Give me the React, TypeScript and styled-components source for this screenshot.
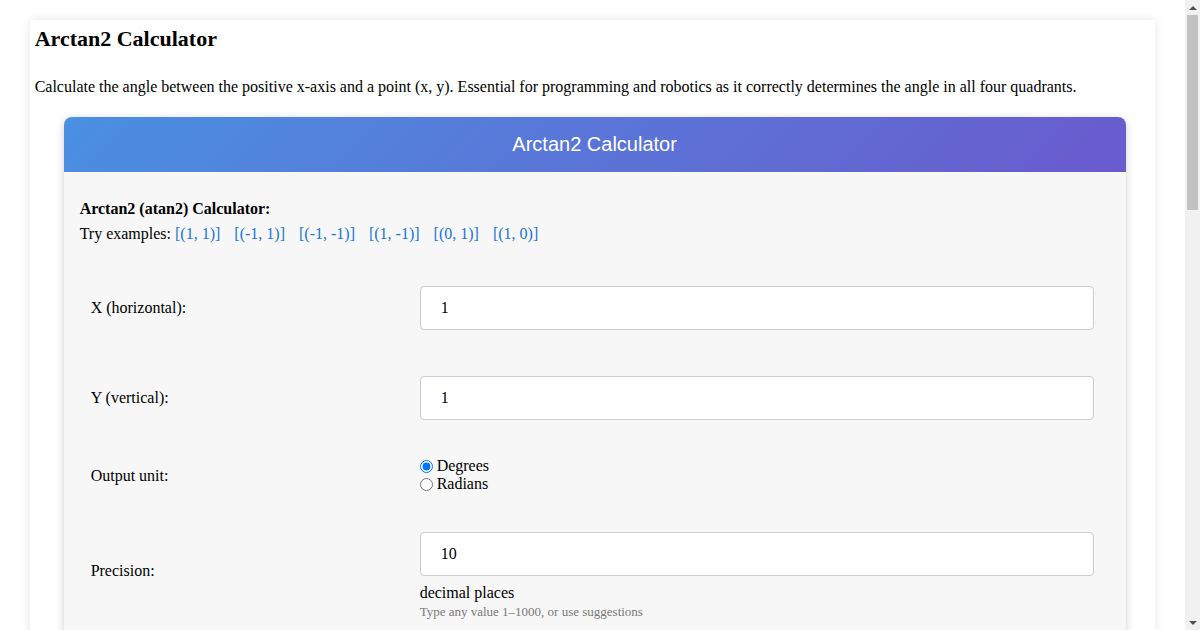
import React, { useState } from "react"
import styled, { createGlobalStyle } from "styled-components"

const Global = createGlobalStyle`
  html, body {
    margin: 0;
    padding: 0;
    background: #fff;
    font-family: "Liberation Serif", "Times New Roman", serif;
    color: #000;
  }
`

// the browser's own scrollbar is hidden in the screenshot, so we draw one
const Frame = styled.div`
  width: 1185px;
  padding: 20px 0;
`

const Scrollbar = styled.div`
  position: fixed;
  top: 0;
  right: 0;
  width: 15px;
  height: 100vh;
  background: #f1f1f1;
  display: flex;
  flex-direction: column;
  align-items: center;
`

const ScrollArrow = styled.div<{ $down?: boolean }>`
  width: 15px;
  height: 15px;
  display: flex;
  align-items: center;
  justify-content: center;
  ${(p) => p.$down && "margin-top: auto;"}
  &::after {
    content: "";
    border-left: 4px solid transparent;
    border-right: 4px solid transparent;
    ${(p) => (p.$down ? "border-top: 4px solid #505050;" : "border-bottom: 4px solid #505050;")}
  }
`

const Thumb = styled.div`
  position: absolute;
  top: 15px;
  left: 2px;
  width: 11px;
  height: 195px;
  background: #c1c1c1;
`

const Page = styled.div`
  width: 95%;
  margin: 0 auto;
  padding: 5px 5px 40px;
  box-sizing: border-box;
  background: #fff;
  box-shadow: 0 0 10px rgba(0, 0, 0, 0.1);
`

const Title = styled.h2`
  font-size: 22px;
  font-weight: bold;
  margin: 0 0 26px;
  line-height: 27px;
`

const Intro = styled.p`
  font-size: 16px;
  margin: 0 0 21px;
  line-height: 18px;
`

const Card = styled.div`
  width: 1062px;
  margin-left: 29px;
  border-radius: 8px;
  background: #f7f7f7;
  box-shadow: 0 2px 8px rgba(0, 0, 0, 0.2);
  overflow: hidden;
`

const CardHeader = styled.div`
  height: 55px;
  display: flex;
  align-items: center;
  justify-content: center;
  background: linear-gradient(135deg, #4a90e2, #6a5acd);
  color: #fff;
  font-family: "Liberation Sans", Arial, sans-serif;
  font-size: 20px;
`

const CardBody = styled.div`
  padding: 28px 16px 30px;
`

const Heading = styled.div`
  font-weight: bold;
  font-size: 16px;
  line-height: 18px;
`

const Examples = styled.div`
  margin-top: 7px;
  font-size: 16px;
  line-height: 18px;
  display: flex;
  gap: 14px;
`

const ExampleLink = styled.a`
  color: #1a74d6;
  text-decoration: none;
  cursor: pointer;
  &:first-of-type {
    margin-left: -10px;
  }
`

const Form = styled.div`
  margin-top: 20px;
`

const Row = styled.div`
  display: grid;
  grid-template-columns: 329px 1fr;
  align-items: center;
  padding: 14px 0;
`

const Label = styled.div`
  padding-left: 11px;
  font-size: 16px;
`

const Field = styled.div`
  padding-left: 11px;
`

const TextInput = styled.input`
  display: block;
  box-sizing: border-box;
  width: calc(100% - 16px);
  height: 44px;
  margin: 9px 0;
  padding: 12px 20px;
  border: 1px solid #ccc;
  border-radius: 4px;
  background: #fff;
  font-family: "Liberation Serif", "Times New Roman", serif;
  font-size: 16px;
  color: #000;
  outline: none;
`

const RadioGroup = styled.div`
  padding-bottom: 2px;
`

const RadioLine = styled.label`
  display: flex;
  align-items: center;
  font-size: 16px;
  line-height: 18px;
  input {
    margin: 0 4px 0 0;
    width: 13px;
    height: 13px;
  }
`

const Unit = styled.div`
  font-size: 16px;
  line-height: 18px;
  margin-top: -1px;
`

const Hint = styled.div`
  font-size: 13px;
  line-height: 15px;
  color: #777;
  margin-top: 2px;
`

const Button = styled.button`
  margin: 20px 0 0 11px;
  padding: 12px 28px;
  border: none;
  border-radius: 4px;
  background: linear-gradient(135deg, #4a90e2, #6a5acd);
  color: #fff;
  font-family: "Liberation Sans", Arial, sans-serif;
  font-size: 16px;
`

const Result = styled.div`
  margin: 24px 11px 0;
  padding: 16px;
  background: #fff;
  border: 1px solid #ddd;
  border-radius: 4px;
  font-size: 16px;
  line-height: 24px;
`

const Section = styled.div`
  margin: 30px 29px 0;
  font-size: 16px;
  line-height: 24px;
  h3 {
    font-size: 19px;
    margin: 0 0 10px;
  }
  p {
    margin: 0 0 14px;
  }
`

const examples = ["(1, 1)", "(-1, 1)", "(-1, -1)", "(1, -1)", "(0, 1)", "(1, 0)"]

export default function App() {
  const [unit, setUnit] = useState("deg")
  return (
    <>
      <Global />
      <Frame>
        <Page>
          <Title>Arctan2 Calculator</Title>
          <Intro>
            Calculate the angle between the positive x-axis and a point (x, y). Essential for programming and
            robotics as it correctly determines the angle in all four quadrants.
          </Intro>
          <Card>
            <CardHeader>Arctan2 Calculator</CardHeader>
            <CardBody>
              <Heading>Arctan2 (atan2) Calculator:</Heading>
              <Examples>
                Try examples:
                {examples.map((e) => (
                  <ExampleLink key={e}>[{e}]</ExampleLink>
                ))}
              </Examples>
              <Form>
                <Row>
                  <Label>X (horizontal):</Label>
                  <Field>
                    <TextInput defaultValue="1" />
                  </Field>
                </Row>
                <Row>
                  <Label>Y (vertical):</Label>
                  <Field>
                    <TextInput defaultValue="1" />
                  </Field>
                </Row>
                <Row>
                  <Label>Output unit:</Label>
                  <Field>
                    <RadioGroup>
                      <RadioLine>
                        <input type="radio" checked={unit === "deg"} onChange={() => setUnit("deg")} />
                        Degrees
                      </RadioLine>
                      <RadioLine>
                        <input type="radio" checked={unit === "rad"} onChange={() => setUnit("rad")} />
                        Radians
                      </RadioLine>
                    </RadioGroup>
                  </Field>
                </Row>
                <Row>
                  <Label>Precision:</Label>
                  <Field>
                    <TextInput defaultValue="10" />
                    <Unit>decimal places</Unit>
                    <Hint>Type any value 1–1000, or use suggestions</Hint>
                  </Field>
                </Row>
              </Form>
              <Button>Calculate</Button>
              <Result>
                atan2(1, 1) = 45.0000000000°
                <br />
                Quadrant: I
              </Result>
            </CardBody>
          </Card>
          <Section>
            <h3>What is atan2?</h3>
            <p>
              The two-argument arctangent, atan2(y, x), returns the angle θ between the positive x-axis and the
              ray from the origin to the point (x, y). Unlike the ordinary arctangent of y/x, it uses the signs of
              both arguments to place the angle in the correct quadrant.
            </p>
            <p>The result lies in the range (−π, π] radians, or (−180°, 180°].</p>
            <h3>Formula</h3>
            <p>For x &gt; 0: atan2(y, x) = arctan(y / x)</p>
            <p>For x &lt; 0 and y ≥ 0: atan2(y, x) = arctan(y / x) + π</p>
            <p>For x &lt; 0 and y &lt; 0: atan2(y, x) = arctan(y / x) − π</p>
            <p>For x = 0 and y &gt; 0: atan2(y, x) = π / 2</p>
            <p>For x = 0 and y &lt; 0: atan2(y, x) = −π / 2</p>
            <p>For x = 0 and y = 0: undefined</p>
            <h3>Examples</h3>
            <p>atan2(1, 1) = 45°, atan2(1, −1) = 135°, atan2(−1, −1) = −135°, atan2(−1, 1) = −45°.</p>
            <h3>Applications</h3>
            <p>
              atan2 is used in robotics for heading calculations, in computer graphics for rotating sprites
              toward a target, in navigation for bearings, and in signal processing to find the phase of a
              complex number.
            </p>
            <p>
              Most programming languages provide it directly: Math.atan2 in JavaScript and Java, math.atan2 in
              Python, atan2 in C and C++.
            </p>
          </Section>
        </Page>
      </Frame>
      <Scrollbar>
        <ScrollArrow />
        <Thumb />
        <ScrollArrow $down />
      </Scrollbar>
    </>
  )
}
